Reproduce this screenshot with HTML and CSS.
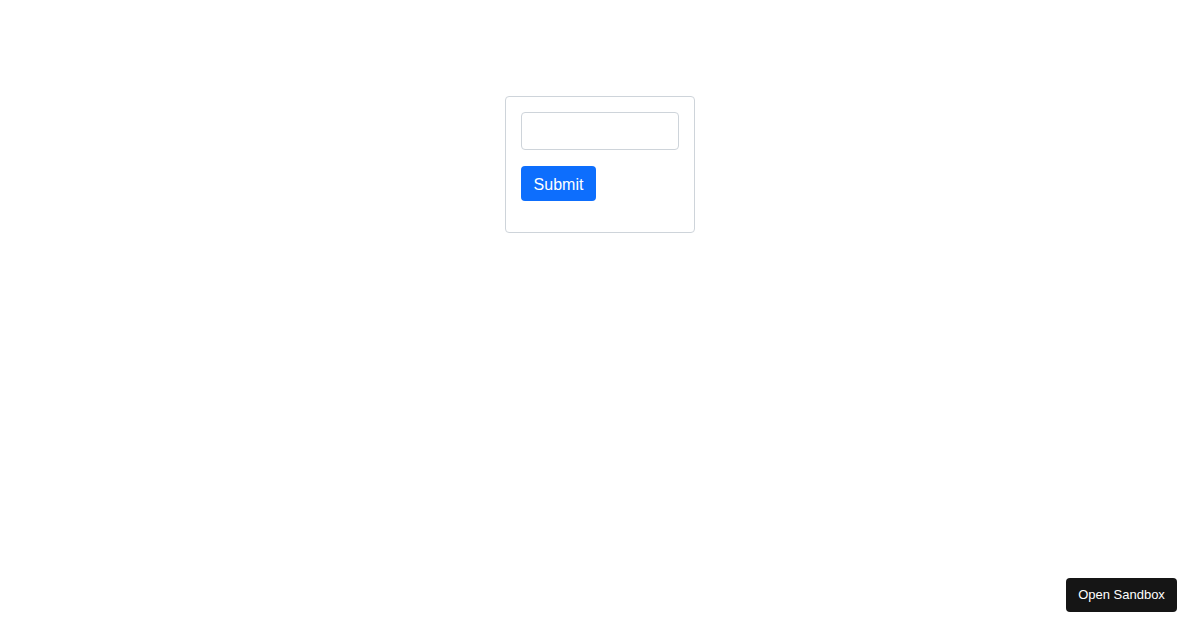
FILE: index.html
```html
<!DOCTYPE html>
<html>
<head>
<meta charset="utf-8">
<link rel="stylesheet" href="styles.css">
</head>
<body>
<main class="page">
  <form class="card">
    <input class="field" type="text">
    <button class="submit" type="button">Submit</button>
  </form>
</main>
<a class="sandbox">Open Sandbox</a>
</body>
</html>
```
FILE: styles.css
```css
html, body {
  margin: 0;
  padding: 0;
  background: #ffffff;
  font-family: "Liberation Sans", Arial, sans-serif;
}
.page {
  display: flex;
  justify-content: center;
  padding-top: 96px;
}
.card {
  box-sizing: border-box;
  width: 190px;
  height: 137px;
  border: 1px solid #ced4da;
  border-radius: 4px;
  padding: 15px;
  display: flex;
  flex-direction: column;
  align-items: flex-start;
  gap: 16px;
}
.field {
  box-sizing: border-box;
  width: 158px;
  height: 38px;
  margin: 0;
  border: 1px solid #ced4da;
  border-radius: 4px;
  background: #fff;
}
.submit {
  box-sizing: border-box;
  width: 75px;
  height: 35px;
  margin: 0;
  border: 0;
  border-radius: 4px;
  background: #0d6efd;
  color: #fff;
  font-family: "Liberation Sans", Arial, sans-serif;
  font-size: 16px;
  padding: 2px 0 0 0;
}
.sandbox {
  position: fixed;
  right: 23px;
  bottom: 18px;
  box-sizing: border-box;
  width: 111px;
  height: 34px;
  padding-bottom: 2px;
  display: flex;
  align-items: center;
  justify-content: center;
  background: #151515;
  color: #fff;
  border-radius: 4px;
  font-size: 13px;
}
```
